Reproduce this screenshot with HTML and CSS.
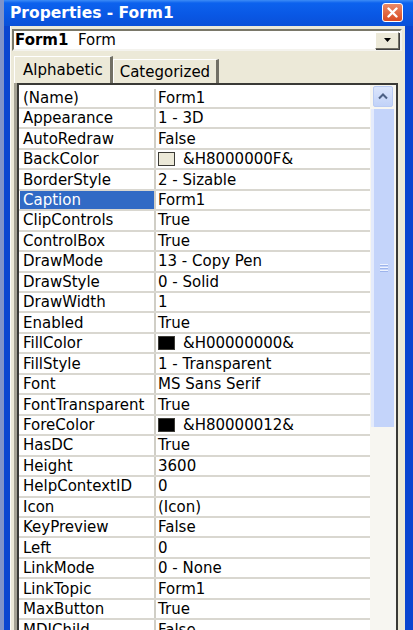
FILE: index.html
```html
<!DOCTYPE html>
<html lang="en">
<head>
  <meta charset="UTF-8" />
  <meta name="viewport" content="width=device-width, initial-scale=1.0"/>
  <title>Properties - Form1</title>
  <link rel="stylesheet" href="styles.css">
</head>
<body>
  <div class="window">
    <div class="titlebar">
      <span class="title">Properties - Form1</span>
      <span class="close">
        <svg width="11" height="11" viewBox="0 0 11 11"><path d="M1.5 1.5 L9.5 9.5 M9.5 1.5 L1.5 9.5" stroke="#fff" stroke-width="2.4" stroke-linecap="round"/></svg>
      </span>
    </div>

    <div class="client">
      <div class="combo">
        <span class="combo-text"><b>Form1</b>&nbsp; Form</span>
        <span class="combo-btn">
          <svg width="9" height="5" viewBox="0 0 9 5"><path d="M1 0 L8 0 L4.5 4 Z" fill="#000"/></svg>
        </span>
      </div>

      <div class="tabs">
        <span class="tab active">Alphabetic</span>
        <span class="tab">Categorized</span>
      </div>

      <div class="grid">
        <div class="rows">
          <div class="row"><span class="name">(Name)</span><span class="value">Form1</span></div>
          <div class="row"><span class="name">Appearance</span><span class="value">1 - 3D</span></div>
          <div class="row"><span class="name">AutoRedraw</span><span class="value">False</span></div>
          <div class="row"><span class="name">BackColor</span><span class="value"><i class="swatch face"></i>&amp;H8000000F&amp;</span></div>
          <div class="row"><span class="name">BorderStyle</span><span class="value">2 - Sizable</span></div>
          <div class="row selected"><span class="name">Caption</span><span class="value">Form1</span></div>
          <div class="row"><span class="name">ClipControls</span><span class="value">True</span></div>
          <div class="row"><span class="name">ControlBox</span><span class="value">True</span></div>
          <div class="row"><span class="name">DrawMode</span><span class="value">13 - Copy Pen</span></div>
          <div class="row"><span class="name">DrawStyle</span><span class="value">0 - Solid</span></div>
          <div class="row"><span class="name">DrawWidth</span><span class="value">1</span></div>
          <div class="row"><span class="name">Enabled</span><span class="value">True</span></div>
          <div class="row"><span class="name">FillColor</span><span class="value"><i class="swatch black"></i>&amp;H00000000&amp;</span></div>
          <div class="row"><span class="name">FillStyle</span><span class="value">1 - Transparent</span></div>
          <div class="row"><span class="name">Font</span><span class="value">MS Sans Serif</span></div>
          <div class="row"><span class="name">FontTransparent</span><span class="value">True</span></div>
          <div class="row"><span class="name">ForeColor</span><span class="value"><i class="swatch black"></i>&amp;H80000012&amp;</span></div>
          <div class="row"><span class="name">HasDC</span><span class="value">True</span></div>
          <div class="row"><span class="name">Height</span><span class="value">3600</span></div>
          <div class="row"><span class="name">HelpContextID</span><span class="value">0</span></div>
          <div class="row"><span class="name">Icon</span><span class="value">(Icon)</span></div>
          <div class="row"><span class="name">KeyPreview</span><span class="value">False</span></div>
          <div class="row"><span class="name">Left</span><span class="value">0</span></div>
          <div class="row"><span class="name">LinkMode</span><span class="value">0 - None</span></div>
          <div class="row"><span class="name">LinkTopic</span><span class="value">Form1</span></div>
          <div class="row"><span class="name">MaxButton</span><span class="value">True</span></div>
          <div class="row"><span class="name">MDIChild</span><span class="value">False</span></div>
        </div>

        <div class="scrollbar">
          <span class="arrow">
            <svg width="10" height="7" viewBox="0 0 10 7"><path d="M1 5.5 L5 1.5 L9 5.5" fill="none" stroke="#4d6185" stroke-width="2"/></svg>
          </span>
          <span class="thumb"><i class="grip"></i></span>
          <span class="track"></span>
        </div>
      </div>
    </div>
  </div>
</body>
</html>
```

FILE: styles.css
```css
body {
  margin: 0;
  padding: 0;
  font-family: "DejaVu Sans", Verdana, sans-serif;
  font-size: 15px;
  color: #000;
  background: #0a45d0;
}
.window {
  height: 630px;
  overflow: hidden;
  border-left: 4px solid #7f93c9;
  display: flex;
  flex-direction: column;
}
.titlebar {
  height: 26px;
  flex: none;
  display: flex;
  align-items: center;
  justify-content: space-between;
  padding: 0 10px 0 6px;
  background: linear-gradient(#3d8cf6 0, #0c62ee 3px, #0957e4 60%, #0a50d8 100%);
}
.title {
  color: #fff;
  font-weight: bold;
  font-size: 15.5px;
  margin-top: -1px;
}
.close {
  width: 19px;
  height: 17px;
  margin-top: -1px;
  border: 1px solid #fff;
  border-radius: 3px;
  background: linear-gradient(#ea8a66, #d84a22);
  display: flex;
  align-items: center;
  justify-content: center;
}
.client {
  flex: 1;
  background: #ece9d8;
  border-left: 6px solid #0a45d0;
  border-right: 8px solid #0a45d0;
  box-shadow: inset 1px 0 #fbfaf6;
}
.combo {
  height: 22px;
  margin: 3px 3px 0 2px;
  box-sizing: border-box;
  background: #fff;
  border: 2px solid #7a7869;
  border-right-color: #f4f3ee;
  border-bottom-color: #f4f3ee;
  display: flex;
  align-items: center;
  justify-content: space-between;
}
.combo-text { padding-left: 1px; }
.combo-btn {
  width: 24px;
  height: 17px;
  margin-right: 1px;
  box-sizing: border-box;
  background: #ece9d8;
  border: 1px solid #fff;
  border-right-color: #716f64;
  border-bottom-color: #716f64;
  box-shadow: 1px 1px 0 #404040;
  display: flex;
  align-items: center;
  justify-content: center;
}
.tabs {
  height: 28px;
  margin-top: 4px;
  padding-left: 4px;
  display: flex;
  align-items: flex-end;
}
.tab {
  height: 23px;
  padding: 0 6px 0 6px;
  border-left: 1px solid #fff;
  border-top: 1px solid #fff;
  border-right: 3px solid #716f64;
  display: flex;
  align-items: center;
}
.tab.active {
  height: 26px;
  padding: 0 7px 0 8px;
}
.grid {
  height: 560px;
  margin: 0 7px;
  border: 2px solid #3a3a36;
  box-shadow: -3px 0 0 #a5a294;
  background: #fff;
  display: flex;
}
.rows {
  flex: 1;
  padding-top: 3.5px;
}
.row {
  height: 20.46px;
  box-sizing: border-box;
  border-bottom: 2px solid #d9d7d0;
  display: flex;
  align-items: center;
}
.name {
  width: 131px;
  height: 100%;
  margin-left: 1px;
  padding-left: 3px;
  border-right: 2px solid #d0cec6;
  display: flex;
  align-items: center;
  white-space: nowrap;
}
.selected .name {
  background: #316ac5;
  color: #fff;
}
.value {
  padding-left: 2px;
  display: flex;
  align-items: center;
  white-space: nowrap;
}
.swatch {
  width: 15px;
  height: 12px;
  margin-right: 8px;
  border: 1px solid #3c3b36;
}
.swatch.face { background: #ece9d8; }
.swatch.black { background: #000; }
.scrollbar {
  width: 26px;
  padding: 1px 2px 0 1px;
  box-sizing: border-box;
  background: #f7f6f1;
  display: flex;
  flex-direction: column;
}
.arrow {
  height: 19px;
  margin: 0 1px 0 2px;
  border: 1px solid #b9cbf3;
  border-radius: 2px;
  background: linear-gradient(#dce6fc, #c1d2f8);
  display: flex;
  align-items: center;
  justify-content: center;
}
.thumb {
  height: 318px;
  margin-top: 2px;
  box-sizing: border-box;
  border-left: 3px solid #e4ebfc;
  background: #c4d4fa;
  display: flex;
  align-items: center;
  justify-content: center;
}
.grip {
  width: 8px;
  height: 9px;
  background: repeating-linear-gradient(#eef3fe 0 1px, #9db4ec 1px 2px, transparent 2px 3px);
}
.track { flex: 1; }
```
